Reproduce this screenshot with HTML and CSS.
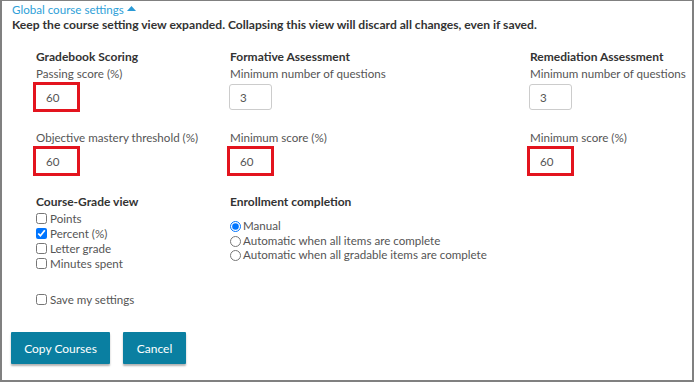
FILE: index.html
```html
<!DOCTYPE html>
<html>
<head>
<meta charset="utf-8">
<link rel="stylesheet" href="styles.css">
</head>
<body>
<div class="frame">
  <div class="toggle">
    <a class="toggle-link" href="#">Global course settings</a>
    <svg class="caret" width="9" height="6" viewBox="0 0 9 6"><path d="M0 6 L4.5 1 L9 6 Z" fill="#2a9ad6"/></svg>
  </div>
  <p class="warning">Keep the course setting view expanded. Collapsing this view will discard all changes, even if saved.</p>

  <div class="settings">
    <div class="col col-1">
      <div class="field">
        <h3 class="heading">Gradebook Scoring</h3>
        <label class="label">Passing score (%)</label>
        <input class="num flagged" type="text" value="60">
      </div>
      <div class="field">
        <label class="label">Objective mastery threshold (%)</label>
        <input class="num flagged" type="text" value="60">
      </div>
      <div class="field">
        <h3 class="heading">Course-Grade view</h3>
        <ul class="options">
          <li><label><input type="checkbox" class="box">Points</label></li>
          <li><label><input type="checkbox" class="box" checked>Percent (%)</label></li>
          <li><label><input type="checkbox" class="box">Letter grade</label></li>
          <li><label><input type="checkbox" class="box">Minutes spent</label></li>
        </ul>
      </div>
      <div class="field">
        <label class="save"><input type="checkbox" class="box">Save my settings</label>
      </div>
    </div>

    <div class="col col-2">
      <div class="field">
        <h3 class="heading">Formative Assessment</h3>
        <label class="label">Minimum number of questions</label>
        <input class="num" type="text" value="3">
      </div>
      <div class="field">
        <label class="label">Minimum score (%)</label>
        <input class="num flagged" type="text" value="60">
      </div>
      <div class="field">
        <h3 class="heading">Enrollment completion</h3>
        <ul class="options radios">
          <li><label><input type="radio" name="enr" class="radio" checked>Manual</label></li>
          <li><label><input type="radio" name="enr" class="radio">Automatic when all items are complete</label></li>
          <li><label><input type="radio" name="enr" class="radio">Automatic when all gradable items are complete</label></li>
        </ul>
      </div>
    </div>

    <div class="col col-3">
      <div class="field">
        <h3 class="heading">Remediation Assessment</h3>
        <label class="label">Minimum number of questions</label>
        <input class="num" type="text" value="3">
      </div>
      <div class="field">
        <label class="label">Minimum score (%)</label>
        <input class="num flagged" type="text" value="60">
      </div>
    </div>
  </div>

  <div class="actions">
    <button class="btn btn-copy">Copy Courses</button>
    <button class="btn btn-cancel">Cancel</button>
  </div>
</div>
</body>
</html>
```

FILE: styles.css
```css
* { box-sizing: border-box; }
html, body { margin: 0; padding: 0; background: #fff; }
body {
  font-family: Lato, "Open Sans", "Liberation Sans", sans-serif;
  font-size: 11.6px;
  color: #555;
}
.frame {
  width: 694px;
  height: 382px;
  border-top: 1px solid #808080;
  border-left: 2px solid #808080;
  border-right: 2px solid #808080;
  border-bottom: 2px solid #808080;
  padding: 1px 0 0 10px;
  overflow: hidden;
}
.toggle {
  display: flex;
  align-items: center;
  gap: 3px;
  height: 15px;
  line-height: 15px;
}
.toggle-link {
  color: #2f9fd8;
  text-decoration: none;
}
.caret { margin-top: -3px; }
.warning {
  margin: 0;
  font-size: 12.1px;
  font-weight: 700;
  color: #333;
  line-height: 15px;
}
.settings {
  display: grid;
  grid-template-columns: 194px 300px auto;
  margin: 16px 0 0 24px;
}
.col {
  display: flex;
  flex-direction: column;
  gap: 19px;
}
.field {
  display: flex;
  flex-direction: column;
  align-items: flex-start;
}
.heading {
  margin: 0;
  font-size: 12px;
  font-weight: 700;
  color: #333;
  line-height: 17px;
}
.label {
  line-height: 17px;
  color: #555;
  white-space: nowrap;
}
.num {
  margin: 2px 0 0 -1px;
  width: 43px;
  height: 26px;
  border: 1px solid #ccc;
  border-radius: 3px;
  padding: 0 0 0 10px;
  font-family: inherit;
  font-size: 11.6px;
  color: #555;
  background: #fff;
}
.num.flagged {
  border-color: #e3141e;
  outline: 3px solid #e3141e;
  outline-offset: -1px;
  border-radius: 0;
}
.options {
  list-style: none;
  margin: 1px 0 0 0;
  padding: 0;
}
.options li { height: 15px; line-height: 15px; }
.options label, .save {
  display: flex;
  align-items: center;
  height: 15px;
  color: #555;
  white-space: nowrap;
}
.radios { margin-top: 9px; }
.radios li { height: 14.5px; line-height: 14.5px; }
.box {
  width: 11px;
  height: 11px;
  margin: 0 3px 0 0;
}
.radio {
  width: 11px;
  height: 11px;
  margin: 0 2px 0 0;
}
.save { margin-top: 2px; }
.actions {
  display: flex;
  gap: 13px;
  margin: 25px 0 0 -1px;
}
.btn {
  height: 32px;
  border: none;
  border-radius: 1px;
  background: #0a7fa1;
  color: #fff;
  font-family: inherit;
  font-size: 12px;
  box-shadow: 0 2px 2px rgba(0,0,0,0.3);
}
.btn-copy { width: 99px; }
.btn-cancel { width: 63px; }
```
